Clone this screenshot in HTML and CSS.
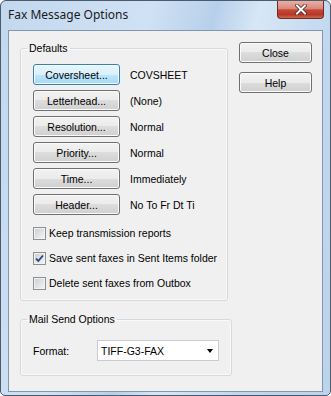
FILE: index.html
```html
<!DOCTYPE html>
<html>
  <head>
    <title>Fax Message Options</title>
    <link rel="stylesheet" href="styles.css">
  </head>
  <body>
    <div class="window">
      <div class="titlebar">
        <span class="title">Fax Message Options</span>
        <div class="close-x">
          <svg width="12" height="11" viewBox="0 0 12 11">
            <path d="M2 1.5 L10 9.5 M10 1.5 L2 9.5" stroke="#4a2520" stroke-width="3.6" stroke-linecap="square"/>
            <path d="M2 1.5 L10 9.5 M10 1.5 L2 9.5" stroke="#ffffff" stroke-width="2" stroke-linecap="square"/>
          </svg>
        </div>
      </div>

      <div class="client">
        <div class="left">
          <fieldset class="group defaults">
            <legend>Defaults</legend>
            <div class="row"><button class="btn focused">Coversheet...</button><span class="value">COVSHEET</span></div>
            <div class="row"><button class="btn">Letterhead...</button><span class="value">(None)</span></div>
            <div class="row"><button class="btn">Resolution...</button><span class="value">Normal</span></div>
            <div class="row"><button class="btn">Priority...</button><span class="value">Normal</span></div>
            <div class="row"><button class="btn">Time...</button><span class="value">Immediately</span></div>
            <div class="row"><button class="btn">Header...</button><span class="value">No To Fr Dt Ti</span></div>

            <div class="checks">
              <label class="check"><span class="box"></span>Keep transmission reports</label>
              <label class="check"><span class="box">
                <svg width="11" height="11" viewBox="0 0 11 11">
                  <path d="M2 5.5 L4.3 8 L9 2.5" fill="none" stroke="#243f78" stroke-width="1.8"/>
                </svg>
              </span>Save sent faxes in Sent Items folder</label>
              <label class="check"><span class="box"></span>Delete sent faxes from Outbox</label>
            </div>
          </fieldset>

          <fieldset class="group mail">
            <legend>Mail Send Options</legend>
            <div class="format-row">
              <span class="format-label">Format:</span>
              <div class="combo">
                <span>TIFF-G3-FAX</span>
                <span class="arrow"></span>
              </div>
            </div>
          </fieldset>
        </div>

        <div class="right">
          <button class="btn side">Close</button>
          <button class="btn side">Help</button>
        </div>
      </div>
    </div>
  </body>
</html>
```

FILE: styles.css
```css
body {
  margin: 0;
  background-color: #ffffff;
  font-family: "Liberation Sans", Arial, sans-serif;
  font-size: 10.5px;
  color: #000000;
}

.window {
  width: 331px;
  height: 396px;
  box-sizing: border-box;
  border: 1px solid #4b5a6c;
  border-radius: 6px 6px 5px 5px;
  background: linear-gradient(105deg, #c3d8ee 0%, #cfe1f4 35%, #b7d0ea 50%, #d7e7f7 60%, #c2d7ee 78%, #bcd3ec 100%);
  display: flex;
  flex-direction: column;
  overflow: hidden;
}

.titlebar {
  height: 29px;
  flex-shrink: 0;
  display: flex;
  justify-content: space-between;
  align-items: flex-start;
  padding: 0 6px 0 7px;
}

.title {
  font-family: "Noto Sans", "Liberation Sans", sans-serif;
  font-size: 12px;
  line-height: 16px;
  margin-top: 6px;
  color: #1a1a1a;
}

.close-x {
  width: 47px;
  height: 18px;
  box-sizing: border-box;
  border: 1px solid #6a2c24;
  border-top: none;
  border-radius: 0 0 4px 4px;
  background: linear-gradient(#e9b0a4 0%, #d9887a 45%, #c4493a 52%, #b83525 80%, #cf6a50 100%);
  display: flex;
  justify-content: center;
  align-items: center;
}

.client {
  flex: 1;
  margin: 0 7px 3px 7px;
  border: 1px solid #8296ae;
  background-color: #f0f0f0;
  display: flex;
  gap: 11px;
  padding: 11px 0 0 11px;
}

.left {
  width: 208px;
  flex-shrink: 0;
}

.group {
  margin: 0;
  padding: 9px 4px 10px 12px;
  border: 1px solid #d3d9de;
  border-radius: 3px;
  box-shadow: inset 0 0 0 1px #fafafa;
  white-space: nowrap;
}

.group legend {
  padding: 0 2px;
  margin-left: -6px;
  line-height: 13px;
}

.row {
  display: flex;
  align-items: center;
  height: 21px;
  margin-bottom: 5px;
}

.btn {
  width: 87px;
  height: 21px;
  padding: 0;
  box-sizing: border-box;
  border: 1px solid #707070;
  border-radius: 3px;
  background: linear-gradient(#f2f2f2 0%, #ebebeb 50%, #dddddd 50%, #cfcfcf 100%);
  box-shadow: inset 0 0 0 1px #fbfbfb;
  font-family: "Liberation Sans", Arial, sans-serif;
  font-size: 10.5px;
  color: #000000;
}

.btn.focused {
  border-color: #3c7fb1;
  background: linear-gradient(#eaf6fd 0%, #d9f0fc 50%, #bee6fd 50%, #a7d9f5 100%);
  box-shadow: inset 0 0 0 1px #f4fbff;
}

.value {
  margin-left: 10px;
}

.checks {
  margin-top: 12px;
  display: flex;
  flex-direction: column;
  gap: 12px;
}

.check {
  display: flex;
  align-items: center;
  gap: 3px;
  height: 13px;
  line-height: 13px;
}

.box {
  width: 13px;
  height: 13px;
  box-sizing: border-box;
  border: 1px solid #8e8f8f;
  background: linear-gradient(135deg, #c9ccd1 0%, #e4e5e7 60%, #f6f6f6 100%);
  box-shadow: inset 0 0 0 1px #f2f2f2;
  display: flex;
  justify-content: center;
  align-items: center;
}

.mail {
  margin-top: 12px;
  padding: 14px 12px 14px 12px;
}

.format-row {
  display: flex;
  align-items: center;
}

.format-label {
  width: 64px;
}

.combo {
  width: 122px;
  height: 21px;
  box-sizing: border-box;
  border: 1px solid #c9ccd2;
  background-color: #ffffff;
  display: flex;
  align-items: center;
  justify-content: space-between;
  padding: 0 5px 0 3px;
}

.arrow {
  width: 0;
  height: 0;
  border-left: 3.5px solid transparent;
  border-right: 3.5px solid transparent;
  border-top: 4px solid #000000;
}

.right {
  display: flex;
  flex-direction: column;
  gap: 9px;
}

.btn.side {
  width: 73px;
}
```
